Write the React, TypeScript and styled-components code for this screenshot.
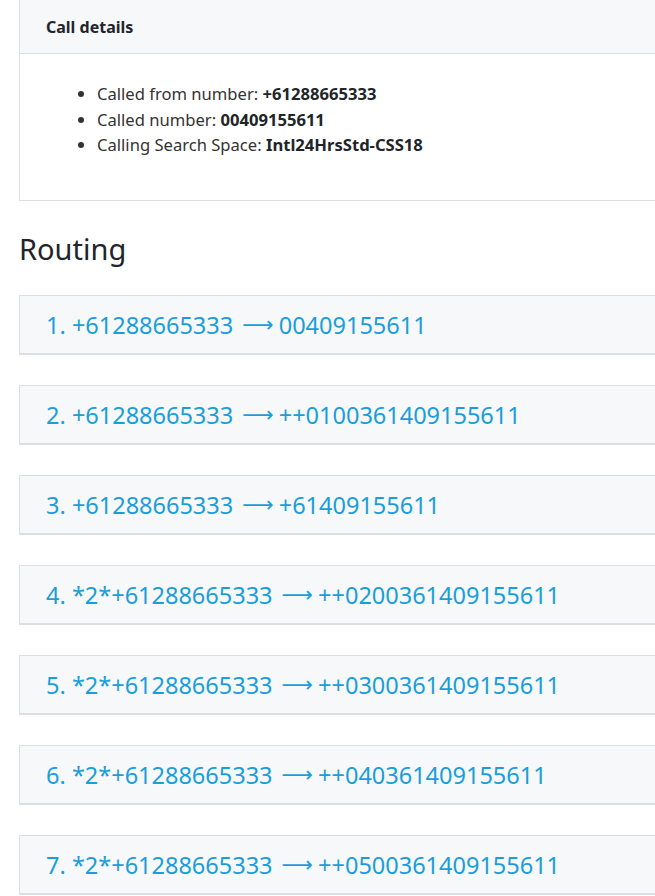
import React from "react";
import styled, { createGlobalStyle } from "styled-components";

const GlobalStyle = createGlobalStyle`
  body {
    margin: 0;
    background: #ffffff;
    font-family: "Noto Sans", "DejaVu Sans", sans-serif;
    color: #212529;
  }
`;

const Page = styled.div`
  padding: 0 0 0 19px;
  width: 700px;
  overflow: hidden;
`;

const Card = styled.div`
  border: 1px solid #dcdee1;
  background: #ffffff;
  margin-top: -1px;
`;

const CardHeader = styled.div`
  background: #f7f8fa;
  border-bottom: 1px solid #dcdee1;
  height: 53px;
  padding: 0 26px;
  display: flex;
  align-items: center;
  font-size: 16px;
  font-weight: 700;
`;

const CardBody = styled.div`
  height: 146px;
  padding-top: 27px;
  box-sizing: border-box;
`;

const DetailList = styled.ul`
  margin: 0;
  padding-left: 77px;
  font-size: 16.6px;
  line-height: 25.5px;
  color: #333;
`;

const Value = styled.b`
  color: #212529;
`;

const Heading = styled.h2`
  margin: 30px 0 0;
  font-size: 29px;
  font-weight: 400;
  line-height: 36px;
  color: #212529;
`;

const RouteList = styled.div`
  display: flex;
  flex-direction: column;
  gap: 30px;
  margin-top: 28px;
`;

const RouteCard = styled.div`
  border: 1px solid #dcdee1;
  background: #ffffff;
`;

const RouteHeader = styled.div`
  background: #f7f8fa;
  border-bottom: 1px solid #dcdee1;
  height: 57px;
  padding: 0 26px;
  display: flex;
  align-items: center;
  font-size: 23.5px;
  color: #1a9ed9;
`;

const Arrow = styled.span`
  font-family: "DejaVu Sans", sans-serif;
  font-size: 22px;
  margin: 0 5px 0 9px;
`;

const routes = [
  ["+61288665333", "00409155611"],
  ["+61288665333", "++0100361409155611"],
  ["+61288665333", "+61409155611"],
  ["*2*+61288665333", "++0200361409155611"],
  ["*2*+61288665333", "++0300361409155611"],
  ["*2*+61288665333", "++040361409155611"],
  ["*2*+61288665333", "++0500361409155611"],
];

const App = () => {
  return (
    <Page>
      <GlobalStyle />
      <Card>
        <CardHeader>Call details</CardHeader>
        <CardBody>
          <DetailList>
            <li>
              Called from number: <Value>+61288665333</Value>
            </li>
            <li>
              Called number: <Value>00409155611</Value>
            </li>
            <li>
              Calling Search Space: <Value>Intl24HrsStd-CSS18</Value>
            </li>
          </DetailList>
        </CardBody>
      </Card>

      <Heading>Routing</Heading>

      <RouteList>
        {routes.map(([from, to], i) => (
          <RouteCard key={i}>
            <RouteHeader>
              {i + 1}. {from}
              <Arrow>⟶</Arrow>
              {to}
            </RouteHeader>
          </RouteCard>
        ))}
      </RouteList>
    </Page>
  );
};

export default App;
